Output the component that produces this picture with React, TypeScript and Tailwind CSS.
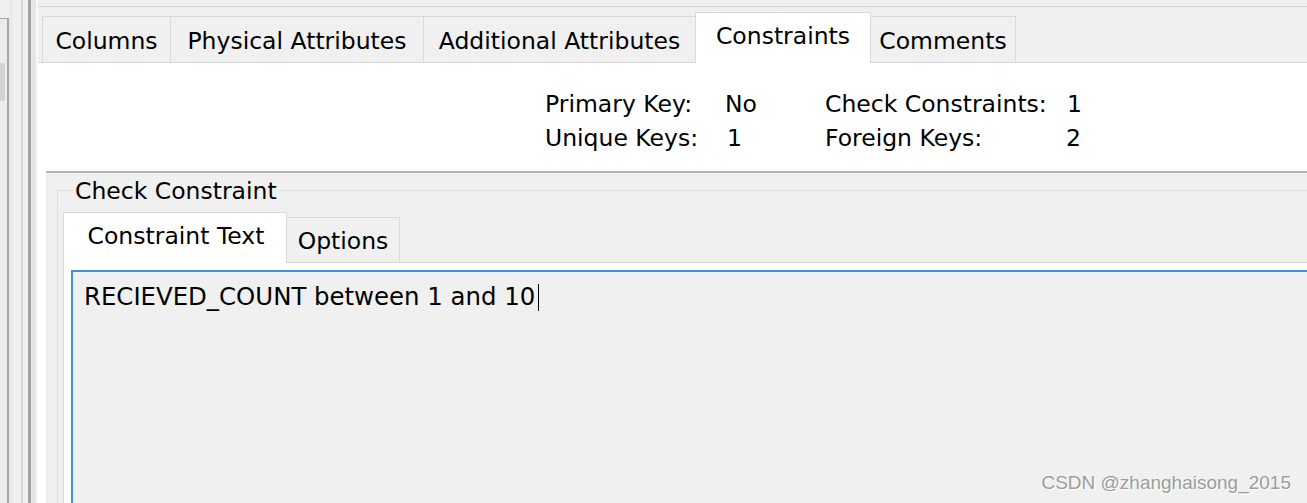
import React from 'react';

const font = { fontFamily: '"DejaVu Sans", Verdana, sans-serif' };

function TopTab({ label, className, active }: { label: string; className: string; active?: boolean }) {
  if (active) {
    return (
      <div className={`h-[51px] -mb-px -ml-px relative z-10 bg-white border border-b-0 border-[#d9d9d9] flex items-start justify-center pt-[10px] ${className}`}>
        {label}
      </div>
    );
  }
  return (
    <div className={`h-[46px] -ml-px bg-[#f0f0f0] border border-b-0 border-[#d9d9d9] flex items-start justify-center pt-[11px] ${className}`}>
      {label}
    </div>
  );
}

export default function App() {
  return (
    <div
      className="w-[1307px] h-[503px] bg-[#f0f0f0] flex overflow-hidden relative text-[23.5px] text-black leading-[26px]"
      style={font}
    >
      {/* left splitter strips */}
      <div className="w-[36px] flex shrink-0">
        <div className="w-[9px] flex flex-col">
          <div className="h-[18px]" />
          <div className="flex-1 border-t border-r-2 border-[#a5a5a5] bg-[#ececec]">
            <div className="mt-[44px] h-[38px] w-[5px] bg-[#d2d2d2]" />
          </div>
        </div>
        <div className="w-[4px] bg-[#e9e9e9]" />
        <div className="w-[8px]" />
        <div className="w-[2px] bg-[#d8d8d8]" />
        <div className="w-[5px]" />
        <div className="w-[3px] bg-[#a0a0a0]" />
        <div className="w-[5px] bg-[#e6e6e6]" />
      </div>

      {/* main editor area */}
      <div className="flex-1 flex flex-col border-l-2 border-[#f8f8f8]">
        <div className="h-[7px] border-b border-[#d6d6d6]" />
        <div className="h-[55px] flex items-end pl-[5px]">
          <TopTab label="Columns" className="w-[129px]" />
          <TopTab label="Physical Attributes" className="w-[254px]" />
          <TopTab label="Additional Attributes" className="w-[273px]" />
          <TopTab label="Constraints" className="w-[176px]" active />
          <TopTab label="Comments" className="w-[146px]" />
        </div>

        <div className="flex-1 bg-white border-t border-[#d9d9d9] flex flex-col">
          {/* summary */}
          <div className="h-[108px] pl-[507px] pt-[24px] leading-[34px]">
            <div className="flex">
              <div className="w-[180px]">Primary Key:</div>
              <div className="w-[100px]">No</div>
              <div className="w-[242px]">Check Constraints:</div>
              <div>1</div>
            </div>
            <div className="flex">
              <div className="w-[182px]">Unique Keys:</div>
              <div className="w-[98px]">1</div>
              <div className="w-[241px]">Foreign Keys:</div>
              <div>2</div>
            </div>
          </div>

          {/* lower panel */}
          <div className="flex-1 ml-[8px] bg-[#f0f0f0] border-t-2 border-[#b4b4b4] flex flex-col pl-[11px]">
            <fieldset className="flex-1 mt-[3px] -mr-[30px] -mb-[30px] border border-[#dcdcdc] flex flex-col">
              <legend className="ml-[15px] px-[2px] leading-[26px] pt-[2px]">Check Constraint</legend>
              <div className="pt-[8px] pl-[5px] flex items-end">
                <div className="w-[224px] h-[51px] -mb-px relative z-10 bg-white border border-b-0 border-[#d9d9d9] flex items-start justify-center pt-[10px] pl-[2px]">
                  Constraint Text
                </div>
                <div className="w-[114px] h-[45px] -ml-px bg-[#f0f0f0] border border-b-0 border-[#d9d9d9] flex items-start justify-center pt-[10px]">
                  Options
                </div>
              </div>
              <div className="flex-1 ml-[5px] bg-white border-t border-l border-[#d9d9d9] pt-[7px] pl-[7px] flex flex-col">
                <div className="flex-1 border-2 border-[#3d8fe4] bg-[#f0f0f0] pl-[11px] pt-[12px] text-[24.4px]">
                  <span>RECIEVED_COUNT between 1 and 10</span>
                  <span className="inline-block w-px h-[27px] bg-black align-top ml-[3px]" />
                </div>
              </div>
            </fieldset>
          </div>
        </div>
      </div>

      <div
        className="absolute right-[16px] bottom-[9px] text-[19px] leading-[22px] text-[#9c9c9c]"
        style={{ fontFamily: '"Liberation Sans", Arial, sans-serif', textShadow: '1px 1px 0 #ffffff' }}
      >
        CSDN @zhanghaisong_2015
      </div>
    </div>
  );
}
